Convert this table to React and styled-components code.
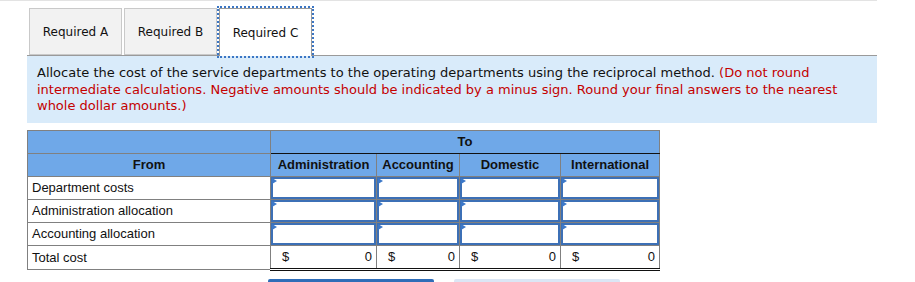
import React from "react";
import styled, { createGlobalStyle } from "styled-components";

const Global = createGlobalStyle`
  html, body { margin: 0; padding: 0; background: #fff; }
  body { font-family: "DejaVu Sans", Verdana, sans-serif; }
`;

const Page = styled.div`
  padding-left: 27px;
  width: 850px;
  border-top: 1px solid #e3e3e3;
  padding-top: 7px;
`;

const TabBar = styled.div`
  display: flex;
  gap: 2px;
  padding-left: 2px;
  border-bottom: 1px solid #9a9a9a;
  height: 47px;
`;

const Tab = styled.div`
  box-sizing: border-box;
  width: 93px;
  height: ${(p) => (p.$active ? "48px" : "47px")};
  display: flex;
  align-items: center;
  justify-content: center;
  font-size: 12px;
  color: #111;
  background: ${(p) => (p.$active ? "#fff" : "#f2f2f2")};
  border: 1px solid ${(p) => (p.$active ? "#9a9a9a" : "#c9c9c9")};
  border-bottom: ${(p) => (p.$active ? "none" : "1px solid #c9c9c9")};
  outline: ${(p) => (p.$active ? "2px dotted #3b76c4" : "none")};
  outline-offset: 0px;
  position: relative;
  z-index: ${(p) => (p.$active ? 1 : 0)};
`;

const Instructions = styled.div`
  background: #d9ebfa;
  padding: 9px 10px 8px;
  font-size: 13px;
  line-height: 16.5px;
  color: #111;
`;

const Note = styled.span`
  color: #c40000;
`;

const Table = styled.table`
  margin-top: 7px;
  border-collapse: collapse;
  font-family: "Liberation Sans", Arial, sans-serif;
  font-size: 13px;
  color: #111;
  table-layout: fixed;
  width: 632px;
`;

const HeadCell = styled.th`
  background: #6fa8e8;
  height: 22px;
  padding: 0 4px;
  font-weight: bold;
  text-align: center;
  border-left: 1px solid #808080;
  border-right: 1px solid #808080;
  border-top: ${(p) => (p.$top ? "1px solid #808080" : "none")};
  border-bottom: 1px solid ${(p) => (p.$dark ? "#111" : "#808080")};
  white-space: nowrap;
`;

const LabelCell = styled.td`
  height: 22px;
  padding: 0 4px;
  border: 1px solid #808080;
  white-space: nowrap;
`;

const InputCell = styled.td`
  height: 22px;
  padding: 0;
  border: 1px solid #808080;
  position: relative;
`;

const InputBox = styled.div`
  box-sizing: border-box;
  height: 22px;
  border: 2px solid #3c70b6;
  background: #fff;
`;

const Marker = styled.span`
  position: absolute;
  left: 1px;
  top: 1px;
  width: 0;
  height: 0;
  border-top: 3px solid transparent;
  border-bottom: 3px solid transparent;
  border-left: 5px solid #3c78c8;
`;

const TotalCell = styled.td`
  height: 22px;
  padding: 0 4px 0 11px;
  border: 1px solid #808080;
  border-bottom: 3px double #111;
`;

const Amount = styled.div`
  display: flex;
  justify-content: space-between;
`;

const Buttons = styled.div`
  display: flex;
  gap: 20px;
  padding-left: 241px;
  margin-top: 8px;
`;

const Button = styled.div`
  width: 166px;
  height: 30px;
  border-radius: 2px;
  background: ${(p) => (p.$primary ? "#2f6db8" : "#dbe6f5")};
`;

const columns = ["Administration", "Accounting", "Domestic", "International"];
const rows = ["Department costs", "Administration allocation", "Accounting allocation"];
const widths = [243, 106, 83, 101, 99];

export default function App() {
  return (
    <>
      <Global />
      <Page>
        <TabBar>
          <Tab>Required A</Tab>
          <Tab>Required B</Tab>
          <Tab $active>Required C</Tab>
        </TabBar>
        <Instructions>
          Allocate the cost of the service departments to the operating departments using the reciprocal method.{" "}
          <Note>
            (Do not round intermediate calculations. Negative amounts should be indicated by a minus sign. Round your
            final answers to the nearest whole dollar amounts.)
          </Note>
        </Instructions>
        <Table>
          <colgroup>
            {widths.map((w, i) => (
              <col key={i} style={{ width: w }} />
            ))}
          </colgroup>
          <thead>
            <tr>
              <HeadCell $top />
              <HeadCell $top $dark colSpan={4}>
                To
              </HeadCell>
            </tr>
            <tr>
              <HeadCell>From</HeadCell>
              {columns.map((c) => (
                <HeadCell key={c}>{c}</HeadCell>
              ))}
            </tr>
          </thead>
          <tbody>
            {rows.map((r) => (
              <tr key={r}>
                <LabelCell>{r}</LabelCell>
                {columns.map((c) => (
                  <InputCell key={c}>
                    <InputBox />
                    <Marker />
                  </InputCell>
                ))}
              </tr>
            ))}
            <tr>
              <LabelCell>Total cost</LabelCell>
              {columns.map((c) => (
                <TotalCell key={c}>
                  <Amount>
                    <span>$</span>
                    <span>0</span>
                  </Amount>
                </TotalCell>
              ))}
            </tr>
          </tbody>
        </Table>
        <Buttons>
          <Button $primary />
          <Button />
        </Buttons>
      </Page>
    </>
  );
}
